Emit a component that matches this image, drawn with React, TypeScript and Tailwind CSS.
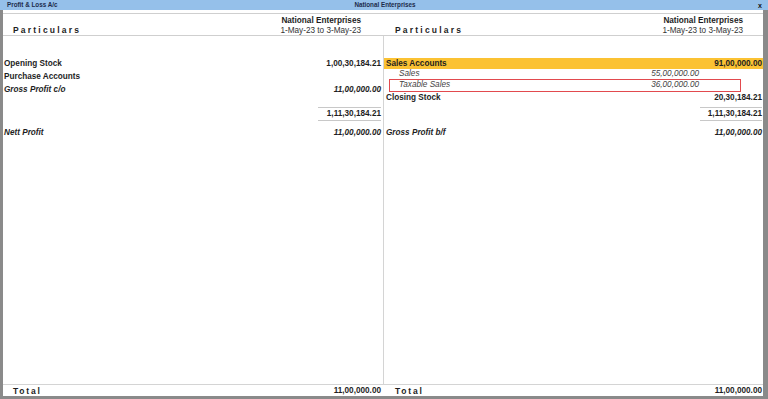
import React from "react";

const font = { fontFamily: '"Liberation Sans", Arial, sans-serif' };

function Row({ label, amount, className = "", labelClass = "", amountClass = "" }: { label?: string; amount?: string; className?: string; labelClass?: string; amountClass?: string }) {
  return (
    <div className={"flex items-center justify-between " + className}>
      <span className={labelClass}>{label}</span>
      <span className={amountClass}>{amount}</span>
    </div>
  );
}

export default function App() {
  return (
    <div className="w-[768px] h-[399px] bg-[#8a8a8a] flex flex-col text-[#1e1e1e]" style={font}>
      {/* title bar */}
      <div className="h-[10px] bg-[#95c0ea] grid grid-cols-[1fr_auto_1fr] items-center pl-[7px] pr-[5px] text-[6.3px] font-bold text-[#1c2b4a] leading-none">
        <span>Profit &amp; Loss A/c</span>
        <span>National Enterprises</span>
        <span className="text-right text-[7px] text-[#111] pr-[1px]">x</span>
      </div>
      <div className="flex-1 flex pl-[3px] pr-[5px] pb-[3px]">
        <div className="flex-1 bg-white flex flex-col">
          <div className="h-[3px]" />
          <div className="h-px bg-[#cfcfcf]" />
          {/* header */}
          <div className="h-[21px] flex">
            <div className="w-[380px] flex justify-between">
              <div className="flex items-end pl-[10px] text-[8.5px] font-bold tracking-[2.2px] leading-[10px]">Particulars</div>
              <div className="pt-[2px] pr-[22px] text-right text-[8.2px] leading-[10px]">
                <div className="font-bold">National Enterprises</div>
                <div className="text-[#333]">1-May-23 to 3-May-23</div>
              </div>
            </div>
            <div className="w-px" />
            <div className="flex-1 flex justify-between">
              <div className="flex items-end pl-[11px] text-[8.5px] font-bold tracking-[2.2px] leading-[10px]">Particulars</div>
              <div className="pt-[2px] pr-[20px] text-right text-[8.2px] leading-[10px]">
                <div className="font-bold">National Enterprises</div>
                <div className="text-[#333]">1-May-23 to 3-May-23</div>
              </div>
            </div>
          </div>
          <div className="h-px bg-[#cfcfcf]" />
          {/* body */}
          <div className="flex-1 flex text-[8.2px] leading-none">
            <div className="w-[380px] flex flex-col pt-[22px] pl-[1px] pr-[2px]">
              <Row className="h-[13px] font-bold" label="Opening Stock" amount="1,00,30,184.21" />
              <Row className="h-[13px] font-bold" label="Purchase Accounts" />
              <Row className="h-[13px] font-bold italic" label="Gross Profit c/o" amount="11,00,000.00" />
              <div className="h-[10px]" />
              <div className="h-[14px] w-[63px] self-end border-t border-b border-[#c8c8c8] flex items-center justify-end font-bold pt-[1px]">1,11,30,184.21</div>
              <div className="h-[5px]" />
              <Row className="h-[13px] font-bold italic pt-[1px]" label="Nett Profit" amount="11,00,000.00" />
            </div>
            <div className="w-px bg-[#d4d4d4]" />
            <div className="flex-1 flex flex-col pt-[22px]">
              <Row className="h-[11px] bg-[#fbc233] font-bold pl-[2px] pr-[1px] pt-[1px]" label="Sales Accounts" amount="91,00,000.00" />
              <Row className="h-[10px] italic text-[#444] pl-[15px] pr-[64px] pt-[1px]" label="Sales" amount="55,00,000.00" />
              <div className="h-[13px] ml-[5px] mr-[22px] border-[1.5px] border-[#e24a4e] flex items-center justify-between pl-[9px] pr-[41px] italic text-[#444]">
                <span>Taxable Sales</span>
                <span>36,00,000.00</span>
              </div>
              <Row className="h-[13px] font-bold pl-[2px] pr-[1px]" label="Closing Stock" amount="20,30,184.21" />
              <div className="h-[2px]" />
              <div className="h-[14px] w-[62px] self-end mr-[1px] border-t border-b border-[#c8c8c8] flex items-center justify-end font-bold pt-[1px]">1,11,30,184.21</div>
              <div className="h-[5px]" />
              <Row className="h-[13px] font-bold italic pl-[2px] pr-[1px] pt-[1px]" label="Gross Profit b/f" amount="11,00,000.00" />
            </div>
          </div>
          <div className="h-px bg-[#d4d4d4]" />
          {/* totals */}
          <div className="h-[11px] flex text-[8.2px] leading-none font-bold pt-[1px]">
            <div className="w-[380px] flex items-center justify-between pl-[10px] pr-[2px]">
              <span className="text-[8.5px] tracking-[1.8px]">Total</span>
              <span>11,00,000.00</span>
            </div>
            <div className="w-px" />
            <div className="flex-1 flex items-center justify-between pl-[11px] pr-[1px]">
              <span className="text-[8.5px] tracking-[1.8px]">Total</span>
              <span>11,00,000.00</span>
            </div>
          </div>
        </div>
      </div>
    </div>
  );
}
